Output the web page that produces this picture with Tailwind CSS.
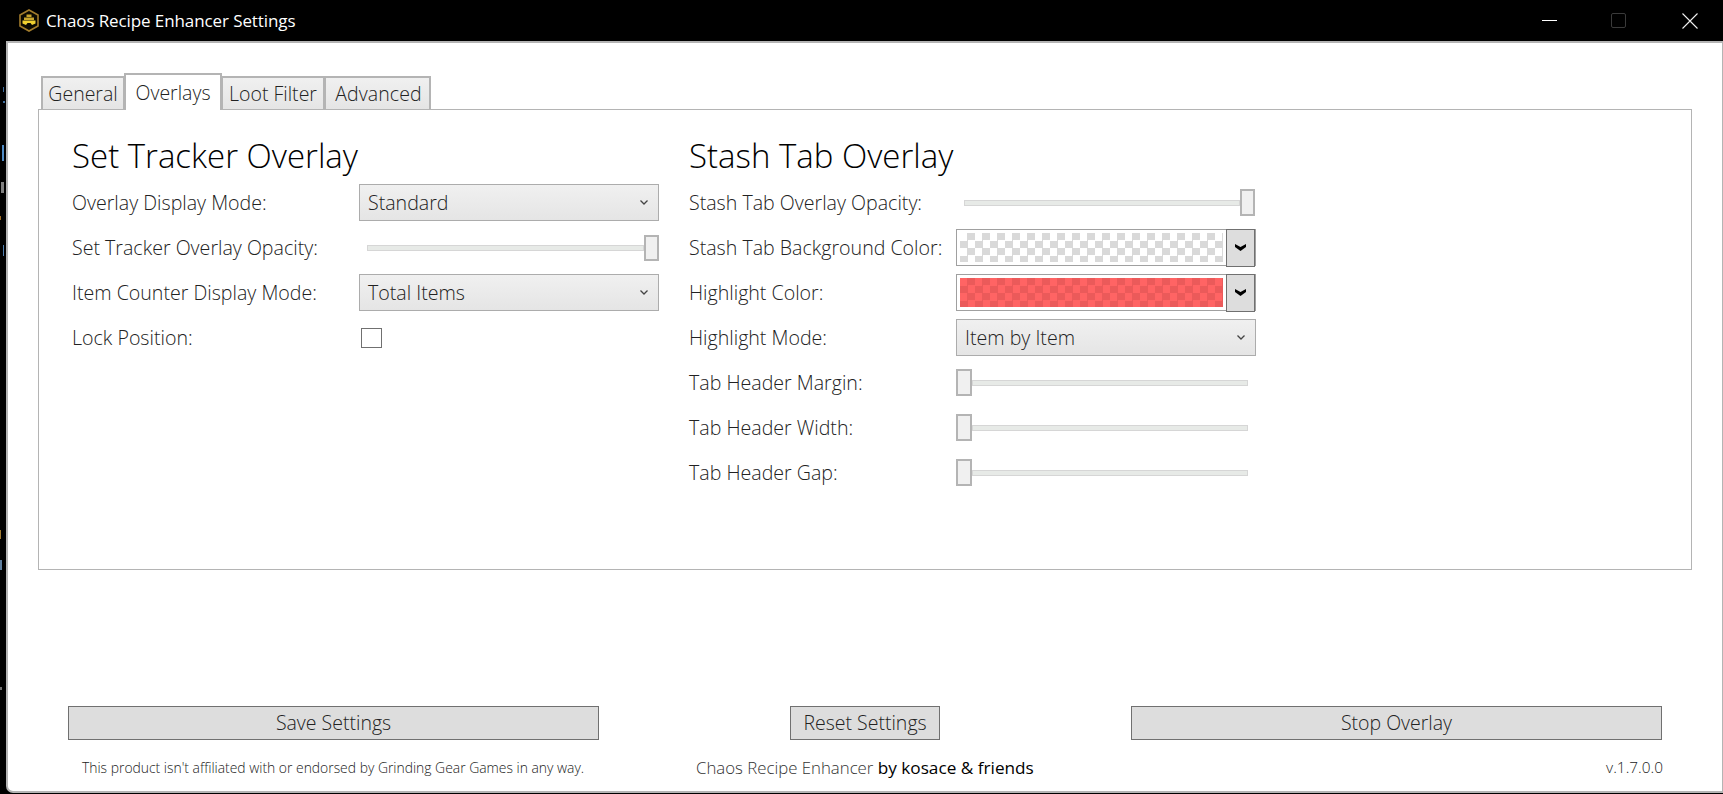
<!DOCTYPE html>
<html lang="en">
<head>
  <meta charset="UTF-8">
  <title>Chaos Recipe Enhancer Settings</title>
  <script src="https://cdn.jsdelivr.net/npm/@tailwindcss/browser@4"></script>
</head>
<body class="relative w-[1723px] h-[794px] overflow-hidden bg-black font-['Open_Sans',sans-serif] font-light text-[#222]">
  <!-- bits of the window behind -->
  <div class="absolute left-[3px] top-[87px] w-px h-[5px] bg-[#3f6f9f]"></div>
  <div class="absolute left-[3px] top-[101px] w-[2px] h-[2px] bg-[#3f6f9f]"></div>
  <div class="absolute left-[2px] top-[145px] w-[2px] h-[16px] bg-[#4f8bc5]"></div>
  <div class="absolute left-[1px] top-[182px] w-[3px] h-[11px] bg-[#808080]"></div>
  <div class="absolute left-0 top-[216px] w-px h-[4px] bg-[#a06a20]"></div>
  <div class="absolute left-[3px] top-[245px] w-px h-[11px] bg-[#4f7fb0]"></div>
  <div class="absolute left-0 top-[530px] w-px h-[9px] bg-[#a07a30]"></div>
  <div class="absolute left-0 top-[560px] w-[2px] h-[10px] bg-[#5f7f9f]"></div>
  <div class="absolute left-0 top-[687px] w-[2px] h-[3px] bg-[#707070]"></div>

  <!-- title bar -->
  <div class="flex items-center h-[41px] text-white">
    <svg class="ml-[19px] w-[20px] h-[23px]" viewBox="0 0 20 23">
      <path d="M10 1 L19 6 V17 L10 22 L1 17 V6 Z" fill="#0c0a02" stroke="#a27c2c" stroke-width="1.6"/>
      <path d="M7.5 5.5 H12.5 V8 H7.5 Z M5 8.5 H15 V11 H5 Z" fill="#c9a52c"/>
      <path d="M3.5 11.5 H16.5 V14.5 L13 16 L11.5 14 H8.5 L7 16 L3.5 14.5 Z" fill="#f0d030"/>
    </svg>
    <span class="ml-[7px] text-[17px] font-normal tracking-[-0.1px]">Chaos Recipe Enhancer Settings</span>
    <div class="ml-auto flex items-center">
      <div class="w-[15px] h-px bg-white mr-[54px]"></div>
      <div class="w-[15px] h-[15px] rounded-[2px] border border-[#3a3a3a] mr-[56px]"></div>
      <svg class="w-[16px] h-[16px] mr-[25px]" viewBox="0 0 16 16"><path d="M0.5 0.5 L15.5 15.5 M15.5 0.5 L0.5 15.5" stroke="#f0f0f0" stroke-width="1.1" fill="none"/></svg>
    </div>
  </div>

  <!-- window body -->
  <div class="ml-[6px] w-[1717px] h-[752px] bg-white border-2 border-r border-[#b4b4b4] rounded-bl-[7px] flex flex-col">
    <div class="flex items-end pl-[33px] pt-[30px] text-[19.5px] leading-none text-[#222]">
      <div class="w-[84px] h-[33px] flex items-center justify-center border-2 border-b-0 border-[#b4b4b4] bg-gradient-to-b from-[#f0f0f0] to-[#e5e5e5]">General</div>
      <div class="relative z-10 -mb-px -ml-px w-[98px] h-[37px] flex items-center justify-center border-2 border-b-0 border-[#b4b4b4] bg-white">Overlays</div>
      <div class="-ml-px w-[104px] h-[33px] flex items-center justify-center border-2 border-b-0 border-[#b4b4b4] bg-gradient-to-b from-[#f0f0f0] to-[#e5e5e5]">Loot Filter</div>
      <div class="-ml-px w-[107px] h-[33px] flex items-center justify-center pl-[2px] border-2 border-b-0 border-[#b4b4b4] bg-gradient-to-b from-[#f0f0f0] to-[#e5e5e5] tracking-[0.1px]">Advanced</div>
    </div>

    <!-- overlays panel -->
    <div class="ml-[30px] w-[1654px] h-[461px] border border-[#b4b4b4] flex pl-[33px] text-[19.6px] text-[#222]">
      <!-- set tracker -->
      <div class="w-[587px]">
        <h2 class="h-[70px] pt-[23px] text-[33px] leading-[46px] text-black">Set Tracker Overlay</h2>
        <div class="flex items-center h-[45px]">
          <span class="w-[287px]">Overlay Display Mode:</span>
          <div class="w-[300px] h-[37px] flex items-center justify-between pl-[8px] pr-[10px] border-[1.5px] border-[#acacac] bg-gradient-to-b from-[#f0f0f0] to-[#e5e5e5]">
            <span>Standard</span>
            <svg class="w-[8px] h-[5px]" viewBox="0 0 8 5"><path d="M0.5 0.5 L4 4 L7.5 0.5" stroke="#444" stroke-width="1.3" fill="none"/></svg>
          </div>
        </div>
        <div class="flex items-center h-[45px]">
          <span class="w-[295px]">Set Tracker Overlay Opacity:</span>
          <div class="w-[277px] h-[6px] bg-[#e7eae7] border border-[#d6d6d6]"></div>
          <div class="w-[15px] h-[26px] bg-[#f0f0f0] border-2 border-[#b4b4b4]"></div>
        </div>
        <div class="flex items-center h-[45px]">
          <span class="w-[287px]">Item Counter Display Mode:</span>
          <div class="w-[300px] h-[37px] flex items-center justify-between pl-[8px] pr-[10px] border-[1.5px] border-[#acacac] bg-gradient-to-b from-[#f0f0f0] to-[#e5e5e5]">
            <span>Total Items</span>
            <svg class="w-[8px] h-[5px]" viewBox="0 0 8 5"><path d="M0.5 0.5 L4 4 L7.5 0.5" stroke="#444" stroke-width="1.3" fill="none"/></svg>
          </div>
        </div>
        <div class="flex items-center h-[45px]">
          <span class="w-[289px]">Lock Position:</span>
          <div class="w-[21px] h-[20px] bg-white border-[1.5px] border-[#707070]"></div>
        </div>
      </div>

      <!-- stash tab -->
      <div class="ml-[30px] w-[567px]">
        <h2 class="h-[70px] pt-[23px] text-[33px] leading-[46px] text-black">Stash Tab Overlay</h2>
        <div class="flex items-center h-[45px]">
          <span class="w-[275px]">Stash Tab Overlay Opacity:</span>
          <div class="w-[276px] h-[6px] bg-[#e7eae7] border border-[#d6d6d6]"></div>
          <div class="w-[15px] h-[27px] bg-[#f0f0f0] border-2 border-[#b4b4b4]"></div>
        </div>
        <div class="flex items-center h-[45px]">
          <span class="w-[267px]">Stash Tab Background Color:</span>
          <div class="w-[300px] h-[37px] flex bg-white border-[1.5px] border-[#a0a0a0]">
            <div class="flex-1 my-[3px] ml-[3px] mr-[3px] bg-white bg-[conic-gradient(#d9d9d9_25%,transparent_0_50%,#d9d9d9_0_75%,transparent_0)] bg-[length:15px_15px]"></div>
            <div class="w-[29px] -my-[1.5px] flex items-center justify-center bg-[#dddddd] border-[1.5px] border-[#707070]">
              <svg class="w-[11px] h-[7px]" viewBox="0 0 11 7"><path d="M0 0 L5.5 3 L11 0 V3 L5.5 7 L0 3 Z" fill="#000"/></svg>
            </div>
          </div>
        </div>
        <div class="flex items-center h-[45px]">
          <span class="w-[267px]">Highlight Color:</span>
          <div class="w-[300px] h-[37px] flex bg-white border-[1.5px] border-[#a0a0a0]">
            <div class="flex-1 my-[3px] ml-[3px] mr-[3px] bg-[#ff6464] bg-[conic-gradient(#eb5a5a_25%,transparent_0_50%,#eb5a5a_0_75%,transparent_0)] bg-[length:15px_15px]"></div>
            <div class="w-[29px] -my-[1.5px] flex items-center justify-center bg-[#dddddd] border-[1.5px] border-[#707070]">
              <svg class="w-[11px] h-[7px]" viewBox="0 0 11 7"><path d="M0 0 L5.5 3 L11 0 V3 L5.5 7 L0 3 Z" fill="#000"/></svg>
            </div>
          </div>
        </div>
        <div class="flex items-center h-[45px]">
          <span class="w-[267px]">Highlight Mode:</span>
          <div class="w-[300px] h-[37px] flex items-center justify-between pl-[8px] pr-[10px] border-[1.5px] border-[#acacac] bg-gradient-to-b from-[#f0f0f0] to-[#e5e5e5]">
            <span>Item by Item</span>
            <svg class="w-[8px] h-[5px]" viewBox="0 0 8 5"><path d="M0.5 0.5 L4 4 L7.5 0.5" stroke="#444" stroke-width="1.3" fill="none"/></svg>
          </div>
        </div>
        <div class="flex items-center h-[45px]">
          <span class="w-[267px]">Tab Header Margin:</span>
          <div class="w-[16px] h-[27px] bg-[#f0f0f0] border-2 border-[#b4b4b4]"></div>
          <div class="w-[276px] h-[6px] bg-[#e7eae7] border border-[#d6d6d6]"></div>
        </div>
        <div class="flex items-center h-[45px]">
          <span class="w-[267px]">Tab Header Width:</span>
          <div class="w-[16px] h-[27px] bg-[#f0f0f0] border-2 border-[#b4b4b4]"></div>
          <div class="w-[276px] h-[6px] bg-[#e7eae7] border border-[#d6d6d6]"></div>
        </div>
        <div class="flex items-center h-[45px]">
          <span class="w-[267px]">Tab Header Gap:</span>
          <div class="w-[16px] h-[27px] bg-[#f0f0f0] border-2 border-[#b4b4b4]"></div>
          <div class="w-[276px] h-[6px] bg-[#e7eae7] border border-[#d6d6d6]"></div>
        </div>
      </div>
    </div>

    <!-- buttons -->
    <div class="mt-[136px] flex items-center pl-[60px] text-[19.5px] text-[#222]">
      <div class="w-[531px] h-[34px] flex items-center justify-center bg-[#dddddd] border border-[#707070]">Save Settings</div>
      <div class="ml-[191px] w-[150px] h-[34px] flex items-center justify-center bg-[#dddddd] border border-[#707070]">Reset Settings</div>
      <div class="ml-[191px] w-[531px] h-[34px] flex items-center justify-center bg-[#dddddd] border border-[#707070]">Stop Overlay</div>
    </div>

    <!-- footer -->
    <div class="mt-[16px] flex items-center h-[24px] pl-[74px] text-[#222]">
      <span class="w-[614px] text-[13.9px]">This product isn't affiliated with or endorsed by Grinding Gear Games in any way.</span>
      <span class="text-[16.8px] text-[#333]">Chaos Recipe Enhancer <span class="text-[17.2px] font-normal text-black">by kosace &amp; friends</span></span>
      <span class="ml-auto mr-[59px] text-[15.4px]">v.1.7.0.0</span>
    </div>
  </div>
</body>
</html>
